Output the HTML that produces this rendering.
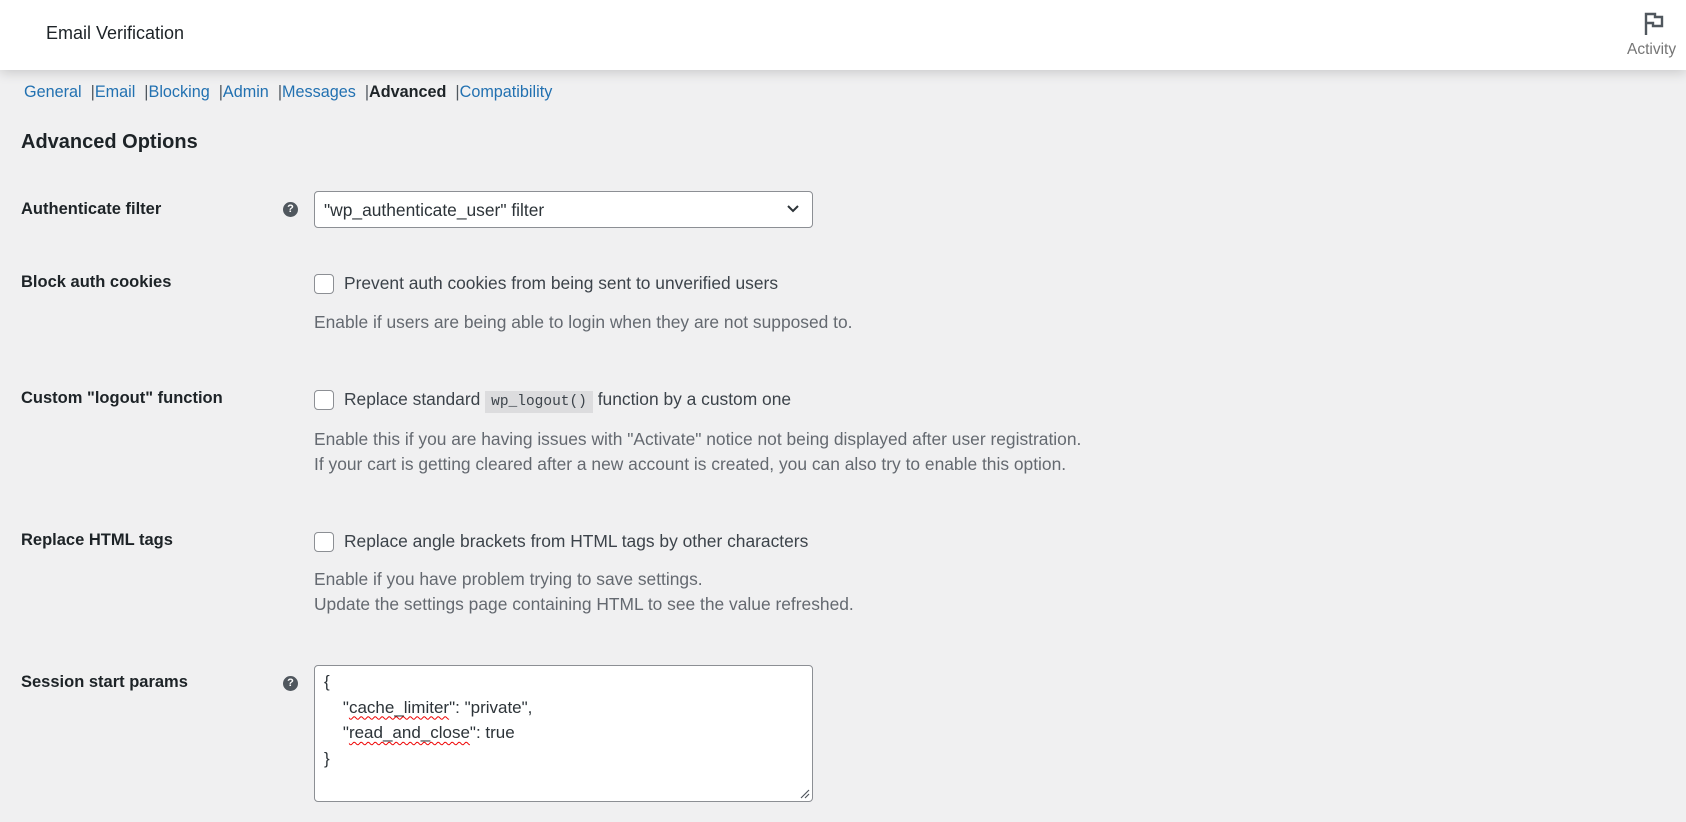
<!DOCTYPE html>
<html><head><meta charset="utf-8"><style>
*{margin:0;padding:0;box-sizing:border-box}
body{width:1686px;height:822px;background:#f0f0f1;font-family:"Liberation Sans",sans-serif;color:#1d2327;position:relative;overflow:hidden}
.hdr{position:absolute;left:0;top:0;width:1686px;height:70px;background:#fff;box-shadow:0 2px 12px rgba(0,0,0,.18)}
.a{position:absolute;white-space:nowrap}
.nav{font-size:16.2px;color:#2271b1}
.nav b{color:#1d2327;font-weight:700}
.nav span{color:#50575e}
.lbl{font-size:16.5px;font-weight:700;color:#1d2327}
.txt{font-size:17.4px;color:#3c434a}
.desc{font-size:17.4px;color:#646970;line-height:25px}
.cb{position:absolute;width:20px;height:20px;border:1px solid #8c8f94;border-radius:4px;background:#fff}
.help{position:absolute;width:15px;height:15px;border-radius:50%;background:#50575e;color:#fff;font-size:11px;font-weight:700;text-align:center;line-height:15px}
code{font-family:"Liberation Mono",monospace;font-size:14.5px;background:#dcdcde;padding:3px 6px;color:#3c434a}
.sq{text-decoration:underline wavy #e00;text-decoration-thickness:1px;text-underline-offset:3px}
</style></head><body>
<div class="hdr"></div>
<div class="a" style="left:46px;top:23px;font-size:18px;color:#1d2327">Email Verification</div>
<svg class="a" style="left:1643px;top:12px" width="22" height="24" viewBox="0 0 22 24"><path d="M3 23V2h9v3h7v9h-9v-3H3" fill="none" stroke="#50575e" stroke-width="2.4" stroke-linejoin="miter"/></svg>
<div class="a" style="left:1627px;top:41px;font-size:15.5px;color:#757575">Activity</div>
<div class="a nav" style="left:24px;top:83px">General &nbsp;<span>|</span>Email &nbsp;<span>|</span>Blocking &nbsp;<span>|</span>Admin &nbsp;<span>|</span>Messages &nbsp;<span>|</span><b>Advanced</b> &nbsp;<span>|</span>Compatibility</div>
<div class="a" style="left:21px;top:131px;font-size:20px;font-weight:700">Advanced Options</div>

<div class="a lbl" style="left:21px;top:200px">Authenticate filter</div>
<div class="help" style="left:283px;top:202px">?</div>
<div class="a" style="left:314px;top:191px;width:499px;height:37px;background:#fff;border:1px solid #8c8f94;border-radius:4px"></div>
<div class="a txt" style="left:324px;top:200px;color:#2c3338">"wp_authenticate_user" filter</div>
<svg class="a" style="left:786px;top:203px" width="14" height="12" viewBox="0 0 14 12"><path d="M2 3l5 5 5-5" fill="none" stroke="#2c3338" stroke-width="2"/></svg>

<div class="a lbl" style="left:21px;top:273px">Block auth cookies</div>
<div class="cb" style="left:314px;top:274px"></div>
<div class="a txt" style="left:344px;top:273px">Prevent auth cookies from being sent to unverified users</div>
<div class="a desc" style="left:314px;top:310px">Enable if users are being able to login when they are not supposed to.</div>

<div class="a lbl" style="left:21px;top:389px">Custom "logout" function</div>
<div class="cb" style="left:314px;top:390px"></div>
<div class="a txt" style="left:344px;top:389px">Replace standard <code>wp_logout()</code> function by a custom one</div>
<div class="a desc" style="left:314px;top:427px">Enable this if you are having issues with "Activate" notice not being displayed after user registration.<br>If your cart is getting cleared after a new account is created, you can also try to enable this option.</div>

<div class="a lbl" style="left:21px;top:531px">Replace HTML tags</div>
<div class="cb" style="left:314px;top:532px"></div>
<div class="a txt" style="left:344px;top:531px">Replace angle brackets from HTML tags by other characters</div>
<div class="a desc" style="left:314px;top:567px">Enable if you have problem trying to save settings.<br>Update the settings page containing HTML to see the value refreshed.</div>

<div class="a lbl" style="left:21px;top:673px">Session start params</div>
<div class="help" style="left:283px;top:676px">?</div>
<div class="a" style="left:314px;top:665px;width:499px;height:137px;background:#fff;border:1px solid #8c8f94;border-radius:4px"></div>
<div class="a txt" style="left:324px;top:669px;line-height:25.5px;font-size:17px;color:#2c3338">{<br>&nbsp;&nbsp;&nbsp;&nbsp;"<span class="sq">cache_limiter</span>": "private",<br>&nbsp;&nbsp;&nbsp;&nbsp;"<span class="sq">read_and_close</span>": true<br>}</div>
<svg class="a" style="left:799px;top:788px" width="11" height="11" viewBox="0 0 11 11"><path d="M10 2L2 10M10 6L6 10" stroke="#50575e" stroke-width="1.2"/></svg>
</body></html>
